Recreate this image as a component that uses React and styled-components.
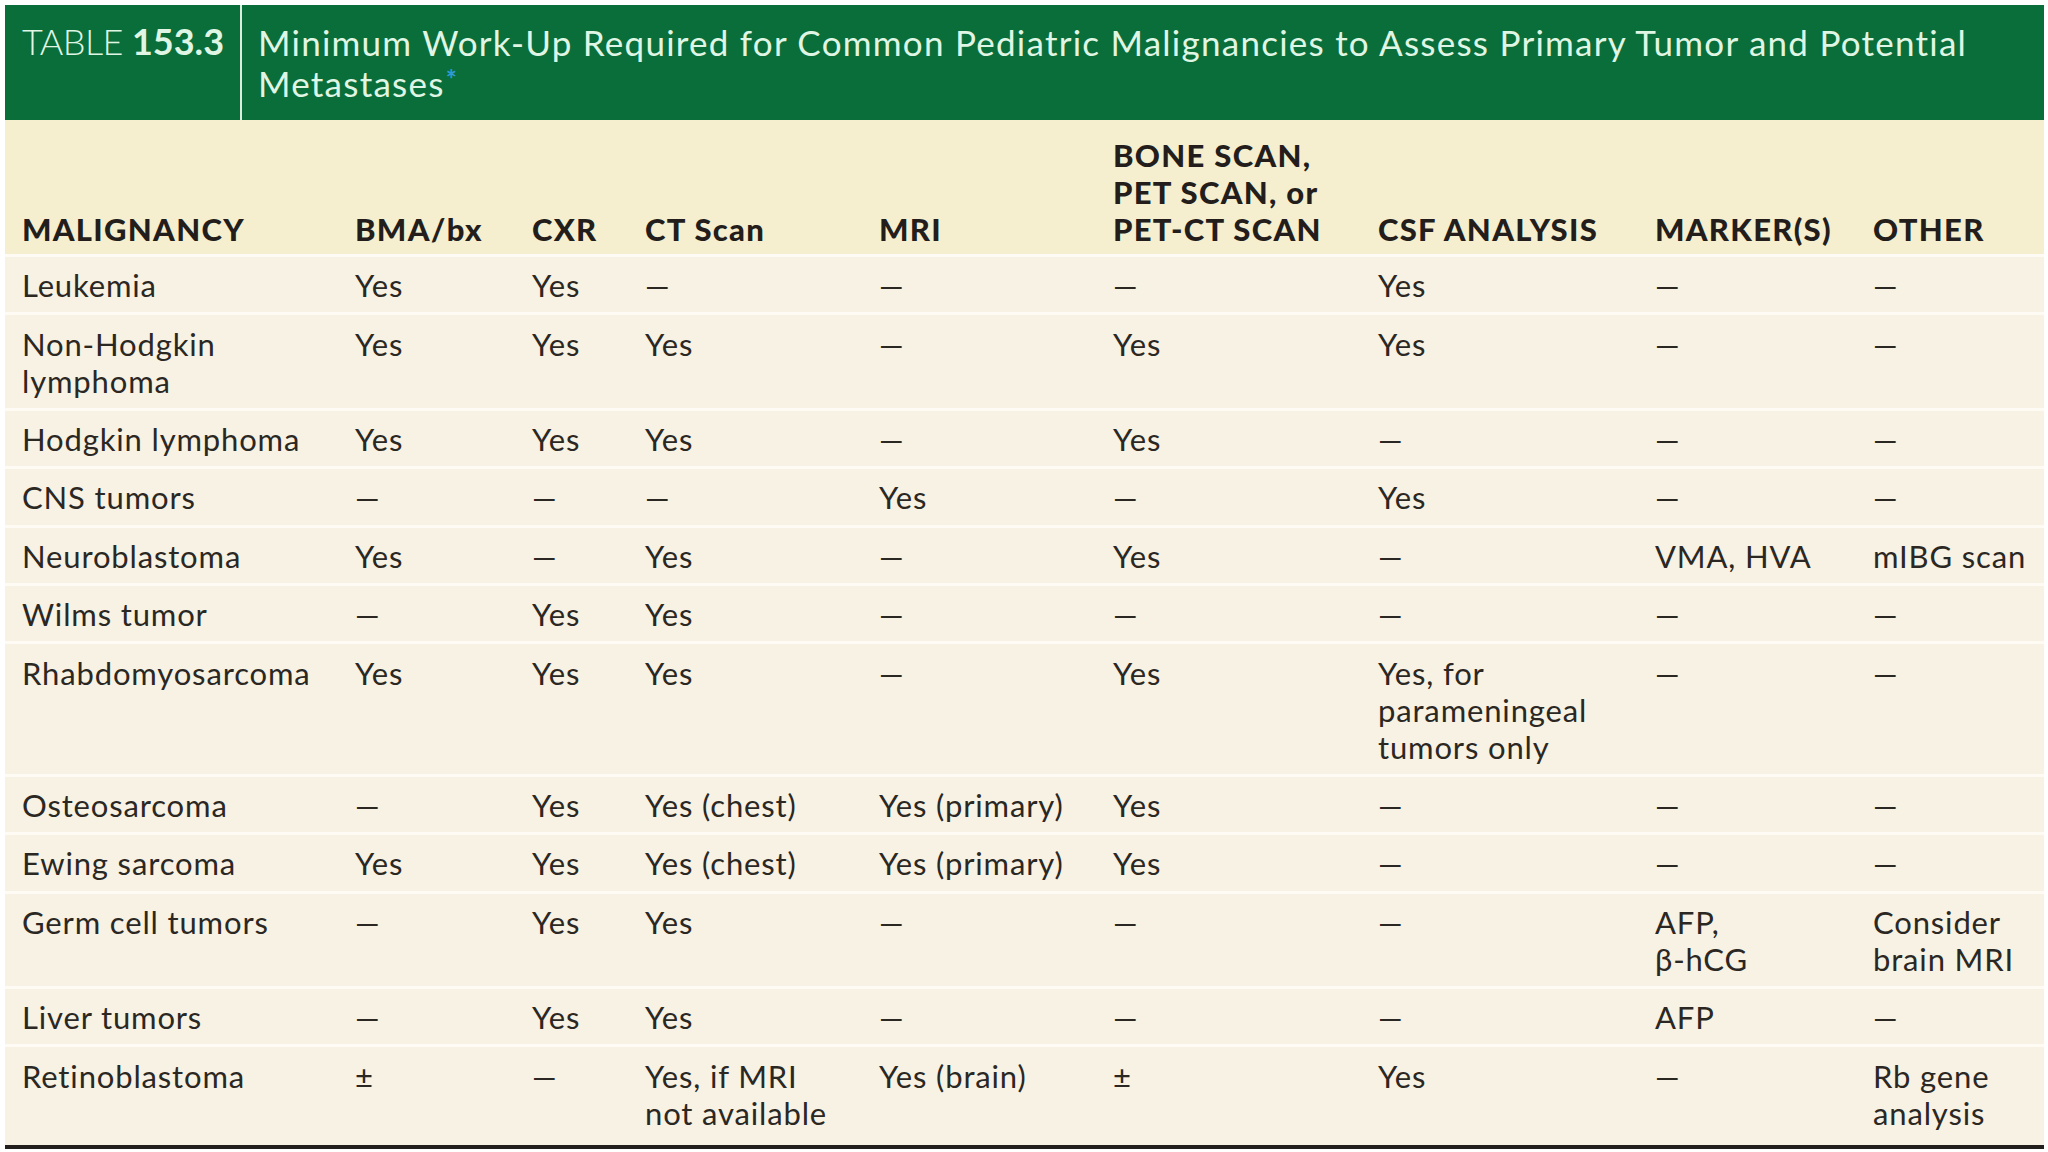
import styled, { createGlobalStyle } from 'styled-components';

const GlobalStyle = createGlobalStyle`
  html, body {
    margin: 0;
    padding: 0;
    background: #ffffff;
  }
`;

const columns = '333px 177px 113px 234px 234px 265px 277px 218px 1fr';

const Page = styled.div`
  padding: 5px 4px 0 5px;
  font-family: Lato, 'Noto Sans', sans-serif;
`;

const TitleBar = styled.header`
  display: flex;
  background: #096e39;
  color: #e0f6e5;
  height: 115px;
`;

const Label = styled.div`
  width: 237px;
  flex-shrink: 0;
  border-right: 2px solid #d9f0de;
  padding: 16px 0 0 17px;
  box-sizing: border-box;
  font-size: 36px;
  line-height: 40px;
  font-weight: 300;
  letter-spacing: -0.6px;

  b {
    font-weight: 700;
    letter-spacing: 0;
  }
`;

const Title = styled.h1`
  margin: 0;
  padding: 17px 0 0 16px;
  font-size: 35px;
  line-height: 41px;
  font-weight: 400;
  letter-spacing: 1.25px;
  white-space: nowrap;
`;

const Star = styled.span`
  color: #2f9bd6;
  font-size: 26px;
  font-weight: 700;
  position: relative;
  top: -8px;
  margin-left: 1px;
`;

const Body = styled.div`
  background: #f7f2e3;
`;

const Row = styled.div`
  display: grid;
  grid-template-columns: ${columns};
  border-bottom: 3px solid #fdfbf3;
`;

const LastRow = styled(Row)`
  border-bottom: 4px solid #231f1c;
  padding-bottom: 5px;
`;

const HeadRow = styled(Row)`
  background: #f5efcf;
  height: 137px;
  align-items: end;
  box-sizing: border-box;
  padding-bottom: 6px;
`;

const HeadCell = styled.div`
  padding-left: 17px;
  font-size: 31px;
  line-height: 37px;
  font-weight: 900;
  color: #231e1b;
  letter-spacing: 1.3px;
  white-space: pre-line;
`;

const Cell = styled.div`
  padding: 10.3px 0 8.1px 17px;
  font-size: 31px;
  line-height: 37px;
  color: #2b2723;
  letter-spacing: 0.85px;
  white-space: pre-line;
`;

const heads = [
  'MALIGNANCY',
  'BMA/bx',
  'CXR',
  'CT Scan',
  'MRI',
  'BONE SCAN,\nPET SCAN, or\nPET-CT SCAN',
  'CSF ANALYSIS',
  'MARKER(S)',
  'OTHER',
];

const D = '—';

const rows = [
  ['Leukemia', 'Yes', 'Yes', D, D, D, 'Yes', D, D],
  ['Non-Hodgkin\nlymphoma', 'Yes', 'Yes', 'Yes', D, 'Yes', 'Yes', D, D],
  ['Hodgkin lymphoma', 'Yes', 'Yes', 'Yes', D, 'Yes', D, D, D],
  ['CNS tumors', D, D, D, 'Yes', D, 'Yes', D, D],
  ['Neuroblastoma', 'Yes', D, 'Yes', D, 'Yes', D, 'VMA, HVA', 'mIBG scan'],
  ['Wilms tumor', D, 'Yes', 'Yes', D, D, D, D, D],
  ['Rhabdomyosarcoma', 'Yes', 'Yes', 'Yes', D, 'Yes', 'Yes, for\nparameningeal\ntumors only', D, D],
  ['Osteosarcoma', D, 'Yes', 'Yes (chest)', 'Yes (primary)', 'Yes', D, D, D],
  ['Ewing sarcoma', 'Yes', 'Yes', 'Yes (chest)', 'Yes (primary)', 'Yes', D, D, D],
  ['Germ cell tumors', D, 'Yes', 'Yes', D, D, D, 'AFP,\nβ-hCG', 'Consider\nbrain MRI'],
  ['Liver tumors', D, 'Yes', 'Yes', D, D, D, 'AFP', D],
  ['Retinoblastoma', '±', D, 'Yes, if MRI\nnot available', 'Yes (brain)', '±', 'Yes', D, 'Rb gene\nanalysis'],
];

export default function App() {
  return (
    <Page>
      <GlobalStyle />
      <TitleBar>
        <Label>
          TABLE <b>153.3</b>
        </Label>
        <Title>
          Minimum Work-Up Required for Common Pediatric Malignancies to Assess Primary Tumor and Potential
          <br />
          Metastases
          <Star>*</Star>
        </Title>
      </TitleBar>
      <Body>
        <HeadRow>
          {heads.map((h) => (
            <HeadCell key={h}>{h}</HeadCell>
          ))}
        </HeadRow>
        {rows.map((r, i) => {
          const RowTag = i === rows.length - 1 ? LastRow : Row;
          return (
            <RowTag key={r[0]}>
              {r.map((c, j) => (
                <Cell key={j}>{c}</Cell>
              ))}
            </RowTag>
          );
        })}
      </Body>
    </Page>
  );
}
